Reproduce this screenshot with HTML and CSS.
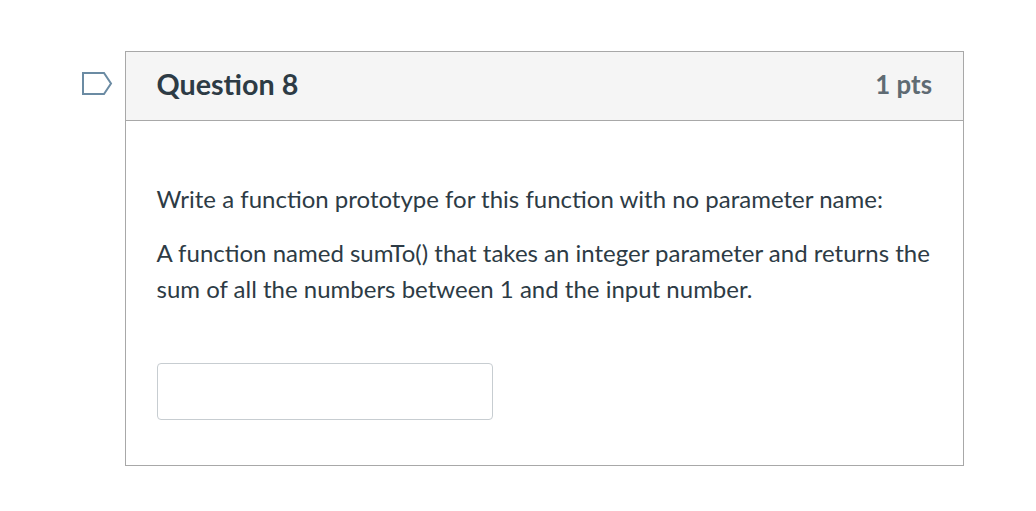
FILE: index.html
```html
<!DOCTYPE html>
<html lang="en">
<head>
<meta charset="utf-8">
<title>Question 8</title>
<link rel="stylesheet" href="styles.css">
</head>
<body>
<div class="page">
  <div class="flag">
    <svg width="32" height="26" viewBox="0 0 32 26"><path d="M2 2H23L30 12.5L23 23H2Z" fill="#fff" stroke="#6b8ba3" stroke-width="2"/></svg>
  </div>
  <section class="question">
    <header class="head">
      <h2 class="title">Question 8</h2>
      <span class="pts">1 pts</span>
    </header>
    <div class="body">
      <p class="first">Write a function prototype for this function with no parameter name:</p>
      <p class="second">A function named sumTo() that takes an integer parameter and returns the sum of all the numbers between 1 and the input number.</p>
      <input class="answer" type="text" aria-label="Answer">
    </div>
  </section>
</div>
</body>
</html>
```
FILE: styles.css
```css
* { box-sizing: border-box; }
html, body { margin: 0; padding: 0; background: #fff; }
body { font-family: Lato, "Liberation Sans", sans-serif; color: #2d3b45; width: 1036px; height: 511px; overflow: hidden; }
.page { display: flex; align-items: flex-start; padding: 51px 0 0 81px; }
.flag { width: 44px; padding-top: 20px; }
.flag svg { display: block; }
.question { width: 839px; height: 415px; border: 1px solid #a8a8a8; }
.head { height: 69px; background: #f5f5f5; border-bottom: 1px solid #a8a8a8; display: flex; justify-content: space-between; align-items: center; padding: 0 31px 5px 30.5px; }
.title { margin: 0; font-size: 28.7px; font-weight: 700; }
.pts { font-size: 25.8px; font-weight: 700; color: #5f6b73; }
.body { padding: 60px 31px 0 30.5px; font-size: 24px; line-height: 36px; }
.body p { margin: 0; }
.first { margin-bottom: 18px !important; }
.answer { display: block; margin-top: 56px; margin-left: 0.5px; width: 336px; height: 57px; border: 1px solid #c7cdd1; border-radius: 4px; background: #fff; }
```
